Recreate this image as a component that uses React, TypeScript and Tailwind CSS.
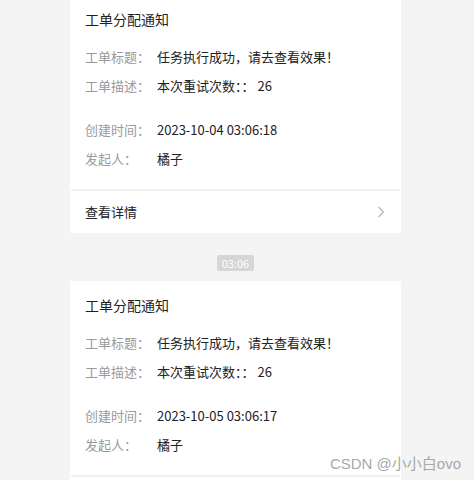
const font = { fontFamily: '"Microsoft YaHei", "Noto Sans CJK SC", "Noto Sans", sans-serif' };

type Notice = { desc: string; created: string };

function Row({ label, value }: { label: string; value: string }) {
  return (
    <div className="flex h-[29px] items-center text-[13px]">
      <span className="w-[72px] text-[#9a9a9a]">{label}</span>
      <span className="text-[#222]">{value}</span>
    </div>
  );
}

function NoticeCard({ notice, footer = true, className }: { notice: Notice; footer?: boolean; className?: string }) {
  return (
    <div className={`w-[331px] bg-white ${className ?? ''}`}>
      <div className="px-[15px] pt-[14px] pb-[16px]">
        <div className="h-[20px] text-[14px] leading-[20px] text-[#1f1f1f]">工单分配通知</div>
        <div className="mt-[13px]">
          <Row label="工单标题：" value="任务执行成功，请去查看效果！" />
          <Row label="工单描述：" value={notice.desc} />
        </div>
        <div className="mt-[15px]">
          <Row label="创建时间：" value={notice.created} />
          <Row label="发起人：" value="橘子" />
        </div>
      </div>
      <div className="mx-[1px] h-[2px] bg-[#f0f0f0]" />
      <div className="flex h-[42px] items-center justify-between px-[15px] text-[13px] text-[#222]">
        {footer && (
          <>
            <span>查看详情</span>
            <svg className="mr-[1px] h-[12px] w-[8px] text-[#b5b5b5]" viewBox="0 0 8 12" fill="none" stroke="currentColor" strokeWidth="1.2">
              <path d="M1.5 1l5 5-5 5" />
            </svg>
          </>
        )}
      </div>
    </div>
  );
}

export default function App() {
  const notices: Notice[] = [
    { desc: '本次重试次数：： 26', created: '2023-10-04 03:06:18' },
    { desc: '本次重试次数：： 26', created: '2023-10-05 03:06:17' },
  ];

  return (
    <div className="relative h-[480px] w-[474px] overflow-hidden bg-[#f4f4f4]" style={font}>
      <div className="flex flex-col pl-[70px]">
        <NoticeCard notice={notices[0]} className="-mt-[5px]" />
        <div className="mt-[22px] mb-[10px] flex w-[331px] justify-center">
          <span className="flex h-[16px] items-center rounded-[2px] bg-[#d6d6d6] px-[5px] text-[11px] text-white">03:06</span>
        </div>
        <NoticeCard notice={notices[1]} footer={false} />
      </div>
      <div className="absolute right-[13px] top-[453px] text-[15px] text-[#a8a8a8]" style={{ fontFamily: '"Liberation Sans", "Noto Sans CJK SC", sans-serif' }}>
        CSDN @小小白ovo
      </div>
    </div>
  );
}
